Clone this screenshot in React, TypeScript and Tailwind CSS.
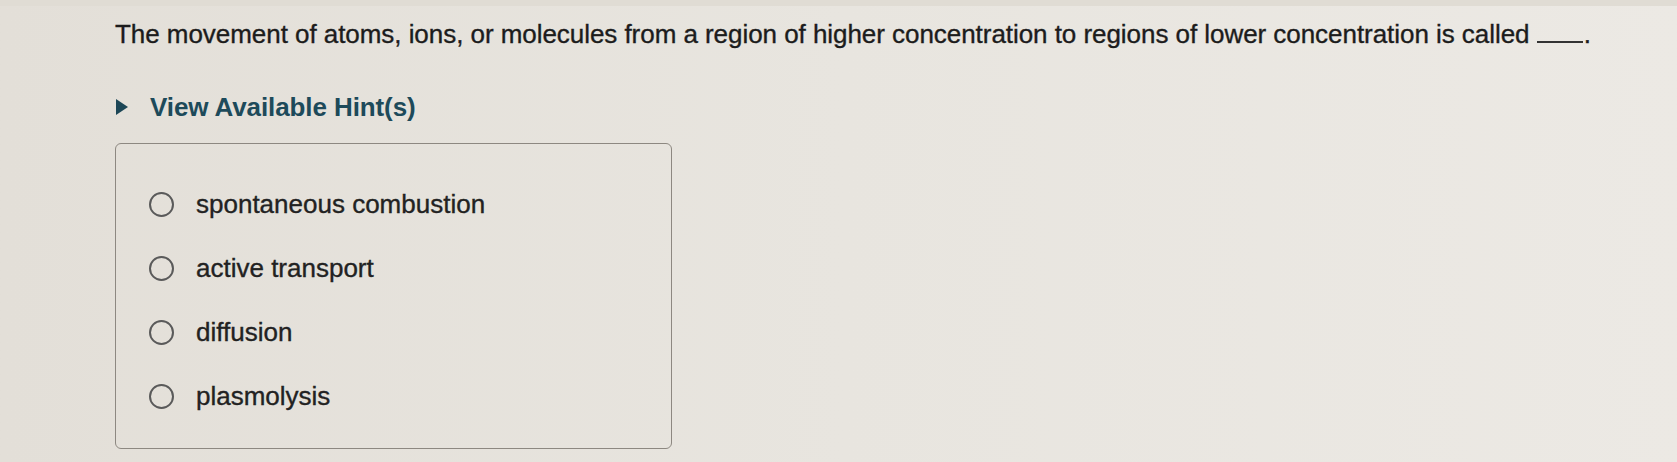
import React from "react";

const options = ["spontaneous combustion", "active transport", "diffusion", "plasmolysis"];

export default function App() {
  return (
    <div
      className="w-[1677px] h-[462px] overflow-hidden bg-linear-to-r from-[#e3dfd8] via-[#e8e5df] to-[#ece9e4] text-[#1e1e1e]"
      style={{ fontFamily: '"Liberation Sans", Arial, sans-serif' }}
    >
      <div className="border-t-[6px] border-[#e0dcd4] pl-[115px] pt-[13px]">
        <p className="text-[26px] leading-[31px] whitespace-nowrap tracking-[-0.05px] text-[#1c1c1c] [-webkit-text-stroke:0.35px_#1c1c1c]">
          The movement of atoms, ions, or molecules from a region of higher concentration to regions of lower concentration is called{" "}
          <span className="inline-block w-[46px] border-b-[2px] border-[#333] align-baseline"></span>
          <span className="ml-[1px]">.</span>
        </p>

        <div className="mt-[42px] flex items-center h-[30px]">
          <svg width="14" height="18" viewBox="0 0 14 18" className="shrink-0">
            <path d="M1 1 L13 9 L1 17 Z" fill="#1c4656" />
          </svg>
          <span className="ml-[21px] text-[26px] leading-[30px] font-bold text-[#1d4a5a] tracking-[-0.1px]">
            View Available Hint(s)
          </span>
        </div>

        <div className="mt-[21px] w-[557px] h-[306px] rounded-[6px] border-[1.5px] border-[#8d8881] pt-[28px] pl-[33px] flex flex-col">
          {options.map((o) => (
            <div key={o} className="h-[64px] flex items-center">
              <span className="w-[25px] h-[25px] rounded-full border-[2px] border-[#5a5a5a] shrink-0"></span>
              <span className="ml-[22px] text-[26px] leading-[30px] text-[#222] [-webkit-text-stroke:0.35px_#222]">{o}</span>
            </div>
          ))}
        </div>
      </div>
    </div>
  );
}
